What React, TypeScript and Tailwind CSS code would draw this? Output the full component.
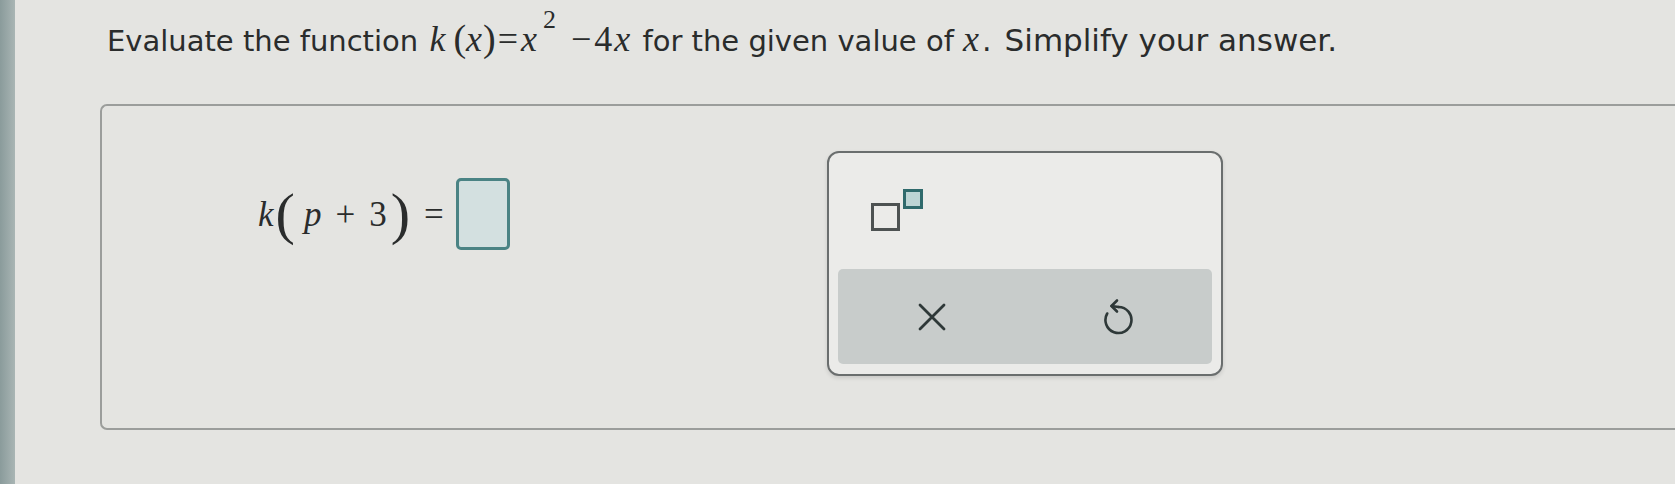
import React from 'react';

const SANS = "font-['DejaVu_Sans','Verdana',sans-serif]";
const SERIF = "font-['Liberation_Serif','Times_New_Roman',serif]";

function SuperscriptIcon() {
  return (
    <div className="flex items-start">
      <div className="mt-[14px] h-[28px] w-[29px] border-[3px] border-[#4d5252]" />
      <div className="ml-[3px] h-[20px] w-[20px] border-[3px] border-[#2f6a6c] bg-[#bcd4d4]" />
    </div>
  );
}

function ClearIcon() {
  return (
    <svg width="28" height="28" viewBox="0 0 28 28" fill="none" stroke="#2e3838" strokeWidth="2.8" strokeLinecap="round">
      <path d="M2 2 L26 26 M26 2 L2 26" />
    </svg>
  );
}

function UndoIcon() {
  return (
    <svg width="30" height="37" viewBox="0 0 30 37" fill="none" stroke="#2e3838" strokeWidth="2.6" strokeLinecap="round" strokeLinejoin="round">
      <path d="M14.5 9 A13 13 0 1 1 3.2 15.5" />
      <path d="M13 2.5 L7.5 8 L13 13.5" />
      <path d="M7.5 8 L14.5 9" />
    </svg>
  );
}

export default function App() {
  return (
    <div className="flex min-h-[484px] w-full bg-[#e4e4e1] text-[#2a2c2c]">
      {/* left window edge */}
      <div className="w-[15px] shrink-0 bg-gradient-to-r from-[#8a9b9b] to-[#a9b5b4]" />

      <div className="flex-1 overflow-hidden">
        {/* question */}
        <div className={`flex h-[63px] items-baseline whitespace-pre pl-[92px] pt-[19px] text-[29px] leading-none ${SANS}`}>
          <span>Evaluate the function </span>
          <span className={`${SERIF} ml-[2px] text-[36px] italic`}>k</span>
          <span className={`${SERIF} ml-[8px] text-[38px]`}>(</span>
          <span className={`${SERIF} text-[36px] italic`}>x</span>
          <span className={`${SERIF} ml-[1px] text-[38px]`}>)</span>
          <span className={`${SERIF} ml-[2px] text-[36px]`}>=</span>
          <span className={`${SERIF} ml-[3px] text-[36px] italic`}>x</span>
          <span className={`${SERIF} relative -top-[23px] ml-[6px] text-[26px]`}>2</span>
          <span className={`${SERIF} ml-[15px] text-[36px]`}>−</span>
          <span className={`${SERIF} ml-[3px] text-[36px]`}>4</span>
          <span className={`${SERIF} ml-[2px] text-[36px] italic`}>x</span>
          <span className="ml-[3px]"> for the given value of </span>
          <span className={`${SERIF} text-[36px] italic`}>x</span>
          <span className="ml-[3px] text-[30px]">.</span>
          <span className="ml-[13px] text-[31px]">Simplify your answer.</span>
        </div>

        {/* answer area */}
        <div className="ml-[85px] mt-[41px] flex h-[326px] items-start rounded-l-[7px] border-2 border-r-0 border-[#9b9d9b] pl-[156px]">
          <div className="w-[569px] shrink-0">
            <div className={`mt-[72px] flex items-center whitespace-pre text-[35px] leading-none ${SERIF}`}>
              <span className="italic">k</span>
              <span className="ml-[2px] text-[58px] font-light">(</span>
              <span className="ml-[9px] italic">p</span>
              <span className="ml-[14px]">+</span>
              <span className="ml-[14px]">3</span>
              <span className="ml-[4px] text-[58px] font-light">)</span>
              <span className="ml-[14px]">=</span>
              <div className="ml-[12px] h-[72px] w-[54px] rounded-[5px] border-[3px] border-[#4a8384] bg-[#d3e0e0]" />
            </div>
          </div>

          {/* math keypad */}
          <div className="mt-[45px] flex h-[225px] w-[396px] shrink-0 flex-col rounded-[12px] border-2 border-[#6a6e6e] bg-[#ebebe9] px-[9px] pb-[10px] pt-[36px] shadow-[0_2px_4px_rgba(0,0,0,0.12)]">
            <div className="pl-[33px]">
              <SuperscriptIcon />
            </div>
            <div className="mt-auto grid h-[95px] grid-cols-2 items-center rounded-[5px] bg-[#c8cccb]">
              <div className="flex justify-center">
                <ClearIcon />
              </div>
              <div className="flex justify-center">
                <UndoIcon />
              </div>
            </div>
          </div>
        </div>
      </div>
    </div>
  );
}
